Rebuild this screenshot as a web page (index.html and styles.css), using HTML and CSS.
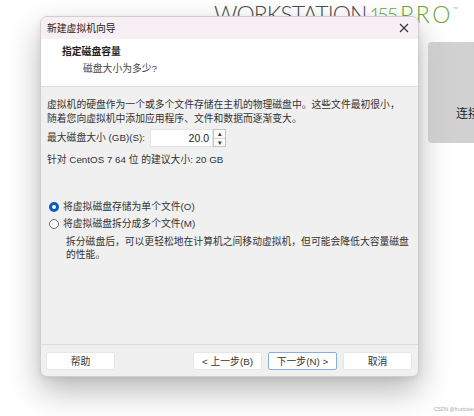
FILE: index.html
```html
<!DOCTYPE html>
<html lang="zh-CN">
<head>
    <meta charset="UTF-8">
    <meta name="viewport" content="width=device-width, initial-scale=1.0">
    <title>新建虚拟机向导</title>
    <link rel="stylesheet" href="styles.css">
</head>
<body>
    <div class="desktop">
        <!-- Workstation backdrop -->
        <div class="brand">
            <span class="brand-name">WORKSTATION</span>
            <span class="brand-num">15.5</span>
            <span class="brand-pro">PRO</span><span class="brand-tm">™</span>
        </div>
        <div class="side-panel"><span>连接</span></div>
        <div class="watermark">CSDN @fruzitotex</div>

        <!-- Wizard window -->
        <div class="wizard">
            <div class="titlebar">
                <span class="title">新建虚拟机向导</span>
                <svg class="close" width="10" height="10" viewBox="0 0 10 10">
                    <path d="M1 1 L9 9 M9 1 L1 9" stroke="#333" stroke-width="1.1" fill="none"/>
                </svg>
            </div>

            <div class="page-header">
                <div class="page-title">指定磁盘容量</div>
                <div class="page-sub">磁盘大小为多少?</div>
            </div>

            <div class="page-body">
                <p class="intro">虚拟机的硬盘作为一个或多个文件存储在主机的物理磁盘中。这些文件最初很小，<br>随着您向虚拟机中添加应用程序、文件和数据而逐渐变大。</p>

                <div class="size-row">
                    <label>最大磁盘大小 (GB)(S):</label>
                    <div class="spin-input">
                        <span class="spin-value">20.0</span>
                        <span class="spin-btns">
                            <span class="spin-up">▴</span>
                            <span class="spin-down">▾</span>
                        </span>
                    </div>
                </div>

                <div class="recommend">针对 CentOS 7 64 位 的建议大小: 20 GB</div>

                <div class="options">
                    <div class="radio-row">
                        <span class="radio checked"></span>
                        <span>将虚拟磁盘存储为单个文件(O)</span>
                    </div>
                    <div class="radio-row">
                        <span class="radio"></span>
                        <span>将虚拟磁盘拆分成多个文件(M)</span>
                    </div>
                    <p class="option-note">拆分磁盘后，可以更轻松地在计算机之间移动虚拟机，但可能会降低大容量磁盘<br>的性能。</p>
                </div>
            </div>

            <div class="footer">
                <button class="btn">帮助</button>
                <div class="footer-right">
                    <button class="btn">&lt; 上一步(B)</button>
                    <button class="btn btn-default">下一步(N) &gt;</button>
                    <button class="btn">取消</button>
                </div>
            </div>
        </div>
    </div>
</body>
</html>
```

FILE: styles.css
```css
* {
    margin: 0;
    padding: 0;
    box-sizing: border-box;
}

body {
    font-family: 'Liberation Sans', 'Noto Sans CJK SC', sans-serif;
    background: #fff;
    color: #333;
    overflow: hidden;
}

.desktop {
    position: relative;
    width: 474px;
    height: 416px;
    overflow: hidden;
    background: #fff;
}

/* backdrop */
.brand {
    position: absolute;
    left: 214px;
    top: 3px;
    display: flex;
    align-items: flex-start;
    font-family: 'Lato', sans-serif;
    font-weight: 300;
    font-size: 23px;
    line-height: 1;
    color: #4d4d4d;
    white-space: nowrap;
}

.brand-name {
    letter-spacing: -0.9px;
}

.brand-num {
    color: #6aa83c;
    font-size: 19px;
    letter-spacing: -3px;
    margin-left: 3px;
    margin-top: 2px;
}

.brand-pro {
    color: #6aa83c;
    margin-left: 5px;
    letter-spacing: 2.5px;
}

.brand-tm {
    font-size: 7px;
    margin-top: 3px;
    margin-left: 0;
    color: #6aa83c;
}

.side-panel {
    position: absolute;
    left: 428px;
    top: 42px;
    width: 60px;
    height: 101px;
    background: linear-gradient(90deg, #dcdcdc 0%, #d2d2d2 20%, #d0d0d0 100%);
    border-radius: 4px 0 0 4px;
    display: flex;
    align-items: center;
    padding-left: 28px;
    padding-top: 40px;
    font-family: 'Noto Sans CJK SC', sans-serif;
    font-size: 12px;
    color: #222;
}

.watermark {
    position: absolute;
    left: 434px;
    top: 406px;
    font-size: 5px;
    color: #aaa;
    white-space: nowrap;
}

/* window */
.wizard {
    position: absolute;
    left: 40px;
    top: 16px;
    width: 379px;
    height: 361px;
    border-radius: 7px;
    border: 1px solid #cfcfcf;
    box-shadow: 0 14px 32px rgba(0,0,0,0.28), 0 2px 6px rgba(0,0,0,0.08);
    overflow: hidden;
    display: flex;
    flex-direction: column;
    background: #f0f0f0;
    font-size: 9.8px;
}

.titlebar {
    height: 22px;
    background: #f7eff3;
    display: flex;
    align-items: center;
    justify-content: space-between;
    padding: 0 9px 0 6px;
    color: #222;
}

.page-header {
    height: 48px;
    background: #fff;
    border-bottom: 1px solid #dedede;
    padding: 4px 0 0 21px;
    line-height: 17px;
}

.page-title {
    font-weight: bold;
    color: #222;
}

.page-sub {
    padding-left: 21px;
    color: #444;
}

.page-body {
    flex: 1;
    padding: 11px 7px 0 6px;
    line-height: 14px;
    color: #333;
}

.intro {
    white-space: nowrap;
}

.size-row {
    display: flex;
    align-items: center;
    margin-top: 3px;
    height: 18px;
}

.size-row label {
    width: 103px;
}

.spin-input {
    display: flex;
    height: 18px;
}

.spin-value {
    width: 63px;
    background: #fff;
    border: 1px solid #e4e4e4;
    text-align: right;
    padding-right: 3px;
    line-height: 16px;
    font-size: 10.5px;
    color: #222;
}

.spin-btns {
    width: 13px;
    display: flex;
    flex-direction: column;
    border: 1px solid #c4c4c4;
    background: #fafafa;
}

.spin-btns span {
    flex: 1;
    font-size: 7px;
    line-height: 8px;
    text-align: center;
    color: #333;
}

.spin-up {
    border-bottom: 1px solid #d4d4d4;
}

.recommend {
    margin-top: 6px;
}

.options {
    margin-top: 31px;
}

.radio-row {
    display: flex;
    align-items: center;
    height: 17px;
    gap: 4px;
    padding-left: 2px;
}

.radio {
    width: 10px;
    height: 10px;
    border-radius: 50%;
    border: 1px solid #6e6e6e;
    background: #fff;
}

.radio.checked {
    border: 3px solid #0b5cc0;
    background: #fff;
}

.option-note {
    padding-left: 19px;
    line-height: 13px;
    margin-top: 3px;
    white-space: nowrap;
}

.footer {
    height: 32px;
    border-top: 1px solid #dcdcdc;
    display: flex;
    justify-content: space-between;
    padding: 7px 6px 0 5px;
}

.footer-right {
    display: flex;
    gap: 6px;
}

.btn {
    width: 69px;
    height: 18px;
    background: #fff;
    border: 1px solid #e6e6e6;
    border-radius: 2px;
    font-family: inherit;
    font-size: 9.8px;
    color: #333;
}

.btn-default {
    border-color: #86aede;
}
```
